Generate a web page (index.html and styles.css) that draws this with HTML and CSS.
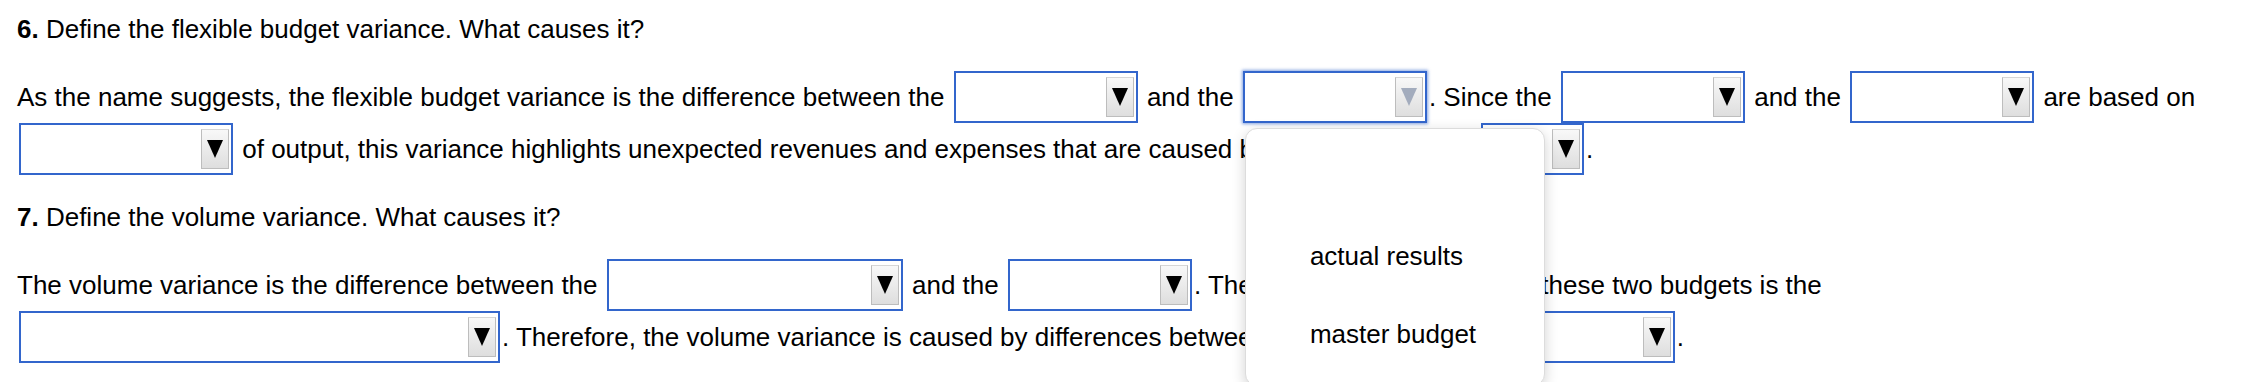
FILE: index.html
```html
<!DOCTYPE html>
<html lang="en">
<head>
    <meta charset="UTF-8">
    <meta name="viewport" content="width=device-width, initial-scale=1.0">
    <title>Flexible Budgets - Review Questions</title>
    <link rel="stylesheet" href="styles.css">
</head>
<body>
    <div class="worksheet">
        <p class="question"><b>6.</b> Define the flexible budget variance. What causes it?</p>
        <p class="answer">As the name suggests, the flexible budget variance is the difference between the <span class="dropdown"><span class="arrow"></span></span> and the <span class="dropdown open"><span class="arrow"></span><span class="menu"><span class="option"></span><span class="option">actual results</span><span class="option">master budget</span></span></span>. Since the <span class="dropdown"><span class="arrow"></span></span> and the <span class="dropdown"><span class="arrow"></span></span> are based on <span class="dropdown w-md"><span class="arrow"></span></span> of output, this variance highlights unexpected revenues and expenses that are caused by differences in the <span class="dropdown w-sm"><span class="arrow"></span></span>.</p>

        <p class="question"><b>7.</b> Define the volume variance. What causes it?</p>
        <p class="answer">The volume variance is the difference between the <span class="dropdown w-lg"><span class="arrow"></span></span> and the <span class="dropdown"><span class="arrow"></span></span>. The only difference between these two budgets is the <span class="dropdown w-xl"><span class="arrow"></span></span>. Therefore, the volume variance is caused by differences between the <span class="dropdown w-end"><span class="arrow"></span></span>.</p>
    </div>
</body>
</html>
```

FILE: styles.css
```css
body {
    font-family: "Liberation Sans", Arial, Helvetica, sans-serif;
    font-size: 26px;
    color: #000;
    margin: 0;
    padding: 3px 8px 3px 17px;
    background: #fff;
}
.question {
    margin: 0;
    line-height: 52px;
}
.answer {
    margin: 16px 0;
    line-height: 52px;
}
.dropdown {
    position: relative;
    display: inline-flex;
    align-items: center;
    justify-content: flex-end;
    box-sizing: border-box;
    width: 184px;
    height: 52px;
    margin: 0 2px;
    padding-right: 2px;
    border: 2px solid #3366cc;
    background: #fff;
    vertical-align: top;
}
.dropdown.w-sm { width: 103px; }
.dropdown.w-md { width: 214px; }
.dropdown.w-lg { width: 296px; }
.dropdown.w-xl { width: 481px; }
.dropdown.w-end { width: 355px; }
.arrow {
    display: flex;
    align-items: center;
    justify-content: center;
    box-sizing: border-box;
    width: 28px;
    height: 40px;
    border: 1px solid #bdbdbd;
    border-top-color: #d6d6d6;
    background: linear-gradient(#f8f8f8, #dedede);
}
.arrow::before {
    content: "";
    border-left: 8px solid transparent;
    border-right: 8px solid transparent;
    border-top: 18px solid #000;
}
.dropdown.open {
    box-shadow: 0 0 3px 1px rgba(51, 102, 204, 0.6);
}
.dropdown.open .arrow::before {
    border-top-color: #a3acbd;
}
.menu {
    position: absolute;
    top: 55px;
    left: 0;
    z-index: 10;
    display: block;
    box-sizing: border-box;
    width: 300px;
    padding: 10px 0 12px;
    background: #fff;
    border: 1px solid #dcdcdc;
    border-radius: 12px;
    box-shadow: 0 4px 14px rgba(0, 0, 0, 0.18);
}
.option {
    display: block;
    height: 78px;
    line-height: 78px;
    padding-left: 64px;
    white-space: nowrap;
}
```
